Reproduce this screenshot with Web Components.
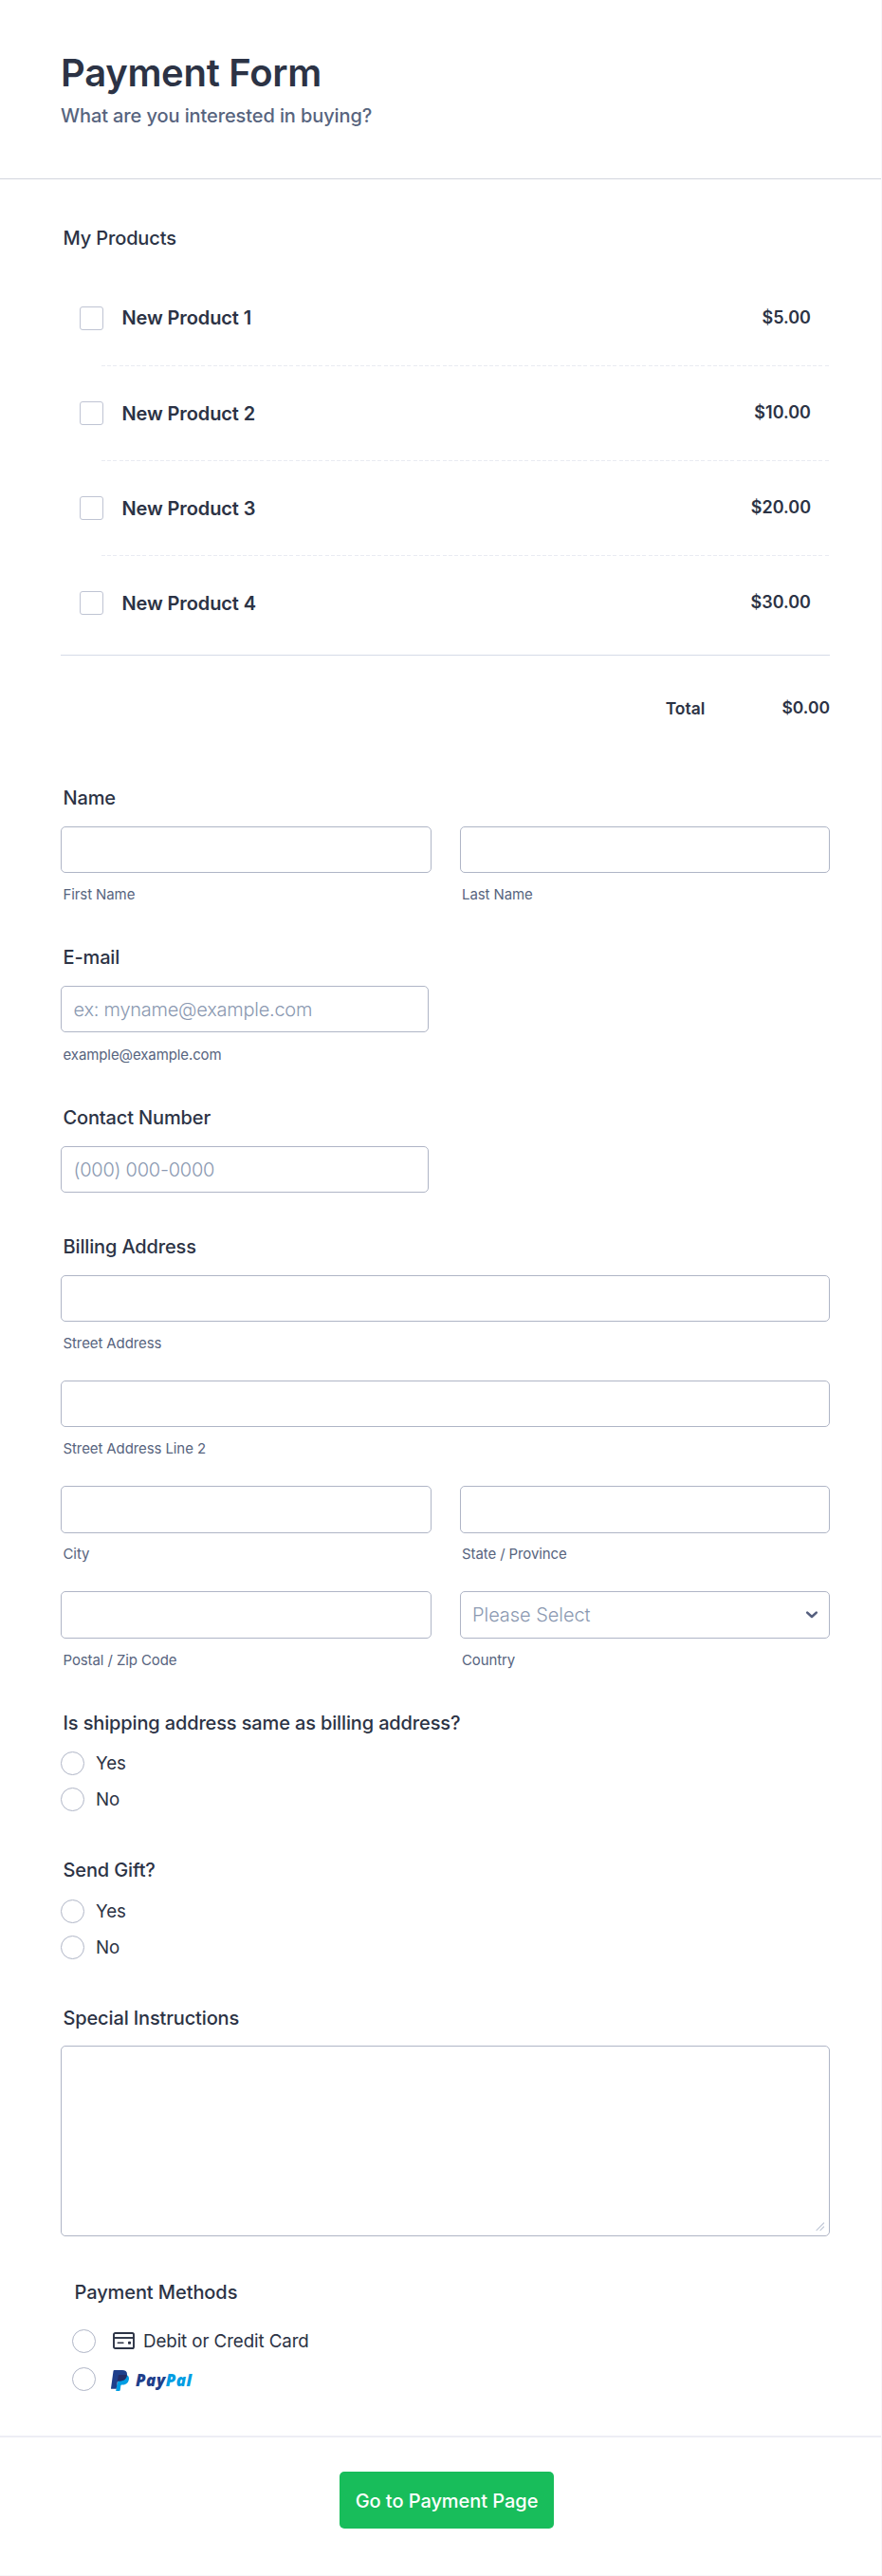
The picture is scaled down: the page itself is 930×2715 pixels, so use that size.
<!DOCTYPE html>
<html lang="en">
<head>
  <meta charset="UTF-8">
  <title>Payment Form</title>
  <style>
    body {
      margin: 0;
      background: #fff;
      color: #2c3345;
      font-family: Inter, "Liberation Sans", sans-serif;
    }
  </style>
</head>
<body>
  <payment-form>
    <form-header slot="header" heading="Payment Form">What are you interested in buying?</form-header>

    <product-list label="My Products" total="0.00">
      <product-item price="5.00">New Product 1</product-item>
      <product-item price="10.00">New Product 2</product-item>
      <product-item price="20.00">New Product 3</product-item>
      <product-item price="30.00">New Product 4</product-item>
    </product-list>

    <form-line label="Name">
      <form-row>
        <text-field sub="First Name"></text-field>
        <text-field sub="Last Name"></text-field>
      </form-row>
    </form-line>

    <form-line label="E-mail">
      <text-field narrow placeholder="ex: myname@example.com" sub="example@example.com" style="--sub-gap: 13px"></text-field>
    </form-line>

    <form-line label="Contact Number">
      <text-field narrow placeholder="(000) 000-0000"></text-field>
    </form-line>

    <form-line label="Billing Address">
      <text-field sub="Street Address"></text-field>
      <text-field sub="Street Address Line 2"></text-field>
      <form-row>
        <text-field sub="City"></text-field>
        <text-field sub="State / Province"></text-field>
      </form-row>
      <form-row>
        <text-field sub="Postal / Zip Code"></text-field>
        <select-field sub="Country">Please Select</select-field>
      </form-row>
    </form-line>

    <form-line choices label="Is shipping address same as billing address?">
      <radio-option name="shipping">Yes</radio-option>
      <radio-option name="shipping">No</radio-option>
    </form-line>

    <form-line choices label="Send Gift?">
      <radio-option name="gift">Yes</radio-option>
      <radio-option name="gift">No</radio-option>
    </form-line>

    <form-line label="Special Instructions" style="--line-gap: 45.5px">
      <text-box></text-box>
    </form-line>

    <payment-methods label="Payment Methods">
      <radio-option name="method" style="--option-gap: 18px">
        <card-icon></card-icon>Debit or Credit Card
      </radio-option>
      <radio-option name="method" style="--option-gap: 16px">
        <paypal-logo></paypal-logo>
      </radio-option>
    </payment-methods>

    <submit-button slot="footer">Go to Payment Page</submit-button>
  </payment-form>

  <script>
    // Attaches an open shadow root with the given markup
    function render(el, html) {
      el.attachShadow({ mode: "open" }).innerHTML = `
        <style>
          * { box-sizing: border-box; margin: 0; }
          :host { display: block; box-sizing: border-box; }
        </style>
        ${html}
      `;
    }

    class PaymentForm extends HTMLElement {
      constructor() {
        super();
        render(this, `
          <style>
            :host {
              height: 2715px;
              border-right: 1px solid #f7f7fa;
              border-bottom: 1px solid #f7f7fa;
            }
            main {
              height: 2378px;
              padding: 42px 54px 0 64px;
            }
            footer {
              border-top: 2px solid #ededf4;
              padding: 36px 0 0 13px;
              display: flex;
              justify-content: center;
            }
          </style>
          <slot name="header"></slot>
          <main><slot></slot></main>
          <footer><slot name="footer"></slot></footer>
        `);
      }
    }

    class FormHeader extends HTMLElement {
      connectedCallback() {
        render(this, `
          <style>
            :host {
              height: 189px;
              padding: 52px 64px 0;
              border-bottom: 1px solid #d3d5de;
            }
            h1 {
              font-size: 40px;
              line-height: 50px;
              font-weight: 600;
              letter-spacing: -0.3px;
            }
            p {
              margin-top: 8px;
              font-size: 20px;
              line-height: 25px;
              font-weight: 500;
              letter-spacing: -0.1px;
              color: #57647e;
            }
          </style>
          <h1>${this.getAttribute("heading")}</h1>
          <p><slot></slot></p>
        `);
      }
    }

    class ProductList extends HTMLElement {
      connectedCallback() {
        render(this, `
          <style>
            :host { height: 597px; }
            h2 {
              padding: 8px 0 0 2.5px;
              font-size: 20px;
              line-height: 25px;
              font-weight: 500;
              letter-spacing: -0.14px;
            }
            .items {
              margin-top: 21px;
              height: 406px;
              border-bottom: 1px solid #d5dbe7;
            }
            .total {
              display: flex;
              justify-content: flex-end;
              padding-top: 44px;
              font-size: 17.5px;
              line-height: 22px;
              font-weight: 600;
            }
            .total span:first-child { padding-top: 1px; margin-right: 81px; }
          </style>
          <h2>${this.getAttribute("label")}</h2>
          <div class="items"><slot></slot></div>
          <div class="total"><span>Total</span><span>$${this.getAttribute("total")}</span></div>
        `);
      }
    }

    class ProductItem extends HTMLElement {
      connectedCallback() {
        render(this, `
          <style>
            :host {
              height: 100px;
              display: grid;
              grid-template-columns: 25px 1fr auto;
              column-gap: 19.5px;
              padding: 38px 20px 0;
              font-weight: 600;
            }
            /* dashed rule starts under the checkbox edge */
            :host(:not(:first-child)) {
              background: repeating-linear-gradient(90deg, #e9ebf2 0 4px, transparent 4px 6.2px) 43px 0 / 768px 1px no-repeat;
            }
            /* the first row sits a hair higher than the rest */
            :host(:first-child) .name { padding-top: 0; }
            input {
              appearance: none;
              width: 25px;
              height: 25px;
              border: 1px solid #bfc4d3;
              border-radius: 3px;
              background: #fff;
            }
            .name {
              padding-top: .7px;
              font-size: 20px;
              line-height: 25px;
              letter-spacing: -0.12px;
            }
            .price {
              padding-top: 1px;
              font-size: 18px;
              line-height: 22px;
            }
          </style>
          <input type="checkbox">
          <span class="name"><slot></slot></span>
          <span class="price">$${this.getAttribute("price")}</span>
        `);
      }
    }

    class FormLine extends HTMLElement {
      connectedCallback() {
        render(this, `
          <style>
            :host { margin-bottom: var(--line-gap, 44px); }
            :host([choices]) {
              --line-gap: 49px;
              --item-gap: 13px;
            }
            .label {
              height: 42.5px;
              padding: 1px 0 0 2.5px;
              font-size: 20px;
              line-height: 25px;
              font-weight: 500;
              letter-spacing: -0.14px;
            }
            :host([choices]) .label { height: 43.5px; }
            .content {
              display: flex;
              flex-direction: column;
              gap: var(--item-gap, 29.75px);
            }
          </style>
          <div class="label">${this.getAttribute("label")}</div>
          <div class="content"><slot></slot></div>
        `);
      }
    }

    class FormRow extends HTMLElement {
      constructor() {
        super();
        render(this, `
          <style>
            :host {
              display: grid;
              grid-template-columns: 1fr 1fr;
              gap: 30px;
            }
          </style>
          <slot></slot>
        `);
      }
    }

    // Shared look of inputs, selects and textareas
    const controlStyle = `
      <style>
        input, select, textarea {
          display: block;
          width: 100%;
          height: 49.5px;
          padding: 0 12.5px;
          border: 1px solid #afb5c6;
          border-radius: 5px;
          background: #fff;
          font: 300 20px Inter, "Liberation Sans", sans-serif;
          color: #2c3345;
          outline: none;
        }
        input { padding-top: 1px; letter-spacing: -0.25px; }
        input::placeholder { color: #8b99b1; opacity: 1; }
        input:focus, select:focus, textarea:focus { border-color: #2e69ff; }
        .sub {
          display: block;
          margin-top: var(--sub-gap, 12px);
          padding: .75px 0 0 2.5px;
          height: 20px;
          font-size: 15px;
          line-height: 20px;
          letter-spacing: -0.1px;
          color: #57647e;
        }
      </style>
    `;

    class TextField extends HTMLElement {
      connectedCallback() {
        const sub = this.getAttribute("sub");
        render(this, `
          ${controlStyle}
          <style>
            :host([narrow]) input { width: 388px; }
          </style>
          <input type="text" placeholder="${this.getAttribute("placeholder") || ""}">
          ${sub ? `<label class="sub">${sub}</label>` : ""}
        `);
      }
    }

    class SelectField extends HTMLElement {
      connectedCallback() {
        render(this, `
          ${controlStyle}
          <style>
            .box { display: grid; align-items: center; }
            .box > * { grid-area: 1 / 1; }
            select { appearance: none; color: #8b99b1; letter-spacing: -0.05px; }
            svg {
              justify-self: end;
              margin-right: 12px;
              pointer-events: none;
            }
          </style>
          <div class="box">
            <select><option>${this.textContent.trim()}</option></select>
            <svg width="14" height="10" viewBox="0 0 14 10" fill="none" stroke="#555f7e" stroke-width="2.6" stroke-linecap="round" stroke-linejoin="round">
              <path d="M2.2 2.6 7 7l4.8-4.4"/>
            </svg>
          </div>
          <label class="sub">${this.getAttribute("sub")}</label>
        `);
      }
    }

    class TextBox extends HTMLElement {
      constructor() {
        super();
        render(this, `
          ${controlStyle}
          <style>
            .box { display: grid; }
            .box > * { grid-area: 1 / 1; }
            textarea { height: 201px; resize: none; }
            svg {
              place-self: end;
              margin: 0 5px 5px 0;
              pointer-events: none;
            }
          </style>
          <div class="box">
            <textarea></textarea>
            <svg width="10" height="10" viewBox="0 0 10 10" fill="none" stroke="#c3cad8" stroke-width="1.2" stroke-linecap="round">
              <path d="M1 8.6 8.6 1M5 8.6 8.6 5"/>
            </svg>
          </div>
        `);
      }
    }

    class RadioOption extends HTMLElement {
      connectedCallback() {
        render(this, `
          <style>
            label {
              display: flex;
              align-items: center;
              gap: var(--option-gap, 12px);
              height: 25px;
              font-size: 18.75px;
              line-height: 25px;
              letter-spacing: -0.1px;
            }
            input {
              appearance: none;
              flex: none;
              width: 25px;
              height: 25px;
              border: 1px solid #afb5c6;
              border-radius: 50%;
              background: #fff;
            }
            span { display: flex; align-items: center; }
          </style>
          <label>
            <input type="radio" name="${this.getAttribute("name")}">
            <span><slot></slot></span>
          </label>
        `);
      }
    }

    class CardIcon extends HTMLElement {
      constructor() {
        super();
        render(this, `
          <style>
            :host { margin-right: 9px; }
            svg { display: block; }
          </style>
          <svg width="23" height="18" viewBox="0 0 23 18" fill="none" stroke="#2c3345" stroke-width="1.9">
            <rect x="1" y="1" width="21" height="16" rx="1.6"/>
            <path d="M1 6h21"/>
            <path d="M5.3 11.3h5.6" stroke-width="1.6" stroke-linecap="round"/>
            <rect x="16" y="9.8" width="3" height="3" rx=".8" fill="#2c3345" stroke="none"/>
          </svg>
        `);
      }
    }

    class PaypalLogo extends HTMLElement {
      constructor() {
        super();
        render(this, `
          <style>
            :host {
              display: flex;
              align-items: center;
              height: 25px;
              padding-top: 3px;
              font: italic 800 17px/22px "Open Sans", sans-serif;
              letter-spacing: .5px;
              color: #1f3f8b;
            }
            svg { margin-right: 7px; }
            i { color: #009de3; }
          </style>
          <svg width="19" height="22" viewBox="0 0 19 22">
            <path fill="#009de3" d="M17 5.2c1.8 1.2 2.3 3 1.8 5-.8 3.8-3.3 5.2-6.7 5.2h-.8c-.5 0-.8.3-.9.8l-.7 4.9c-.1.5-.4.9-.9.9H5.2l1-6.5 3-9.5z"/>
            <path fill="#1f3f8b" d="M3.5 0h8.300c3.600 0 5.700 1.800 5.100 5.300-.7 4.200-3.400 6.200-7.200 6.200H8c-.7 0-1.100.4-1.200 1l-1.100 7.200H.4c-.3 0-.5-.2-.4-.5L2.500.9C2.600.3 3 0 3.500 0z"/>
            <path fill="#232c65" d="M16.9 5.300c-.7 4.200-3.400 6.200-7.200 6.200H8c-.6 0-1 .3-1.200.8L7.700 6c.1-.6.5-1 1.100-1h5.700c.9 0 1.700.1 2.400.3z"/>
          </svg>
          <span>Pay<i>Pal</i></span>
        `);
      }
    }

    class PaymentMethods extends HTMLElement {
      connectedCallback() {
        render(this, `
          <style>
            :host {
              display: flex;
              flex-direction: column;
              gap: 15.5px;
              padding-left: 12px;
            }
            .label {
              padding: 1px 0 10.5px 2.5px;
              font-size: 20px;
              line-height: 25px;
              font-weight: 500;
              letter-spacing: -0.08px;
            }
          </style>
          <div class="label">${this.getAttribute("label")}</div>
          <slot></slot>
        `);
      }
    }

    class SubmitButton extends HTMLElement {
      constructor() {
        super();
        render(this, `
          <style>
            button {
              display: block;
              width: 226px;
              height: 60px;
              padding: 2px 0 0;
              border: 0;
              border-radius: 5px;
              background: #18bd5b;
              color: #fff;
              font: 500 20px Inter, "Liberation Sans", sans-serif;
              letter-spacing: -0.05px;
              white-space: nowrap;
              cursor: pointer;
            }
            button:hover { background: #16aa52; }
          </style>
          <button type="button"><slot></slot></button>
        `);
      }
    }

    customElements.define("payment-form", PaymentForm);
    customElements.define("form-header", FormHeader);
    customElements.define("product-list", ProductList);
    customElements.define("product-item", ProductItem);
    customElements.define("form-line", FormLine);
    customElements.define("form-row", FormRow);
    customElements.define("text-field", TextField);
    customElements.define("select-field", SelectField);
    customElements.define("text-box", TextBox);
    customElements.define("radio-option", RadioOption);
    customElements.define("card-icon", CardIcon);
    customElements.define("paypal-logo", PaypalLogo);
    customElements.define("payment-methods", PaymentMethods);
    customElements.define("submit-button", SubmitButton);
  </script>
</body>
</html>
